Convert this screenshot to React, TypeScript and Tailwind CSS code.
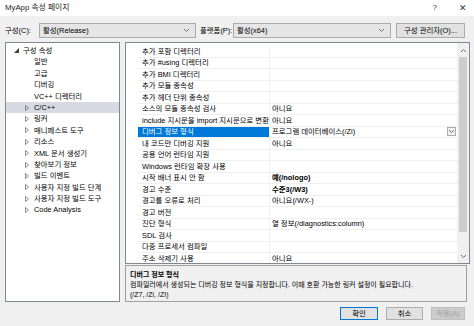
import React from 'react';

const FONT = "font-['Liberation_Sans','Noto_Sans_CJK_KR',sans-serif]";

const treeItems = [
  '일반',
  '고급',
  '디버깅',
  'VC++ 디렉터리',
  'C/C++',
  '링커',
  '매니페스트 도구',
  '리소스',
  'XML 문서 생성기',
  '찾아보기 정보',
  '빌드 이벤트',
  '사용자 지정 빌드 단계',
  '사용자 지정 빌드 도구',
  'Code Analysis',
];
const noArrow = ['일반', '고급', '디버깅', 'VC++ 디렉터리'];

const props: { name: string; value?: string; bold?: boolean }[] = [
  { name: '추가 포함 디렉터리' },
  { name: '추가 #using 디렉터리' },
  { name: '추가 BMI 디렉터리' },
  { name: '추가 모듈 종속성' },
  { name: '추가 헤더 단위 종속성' },
  { name: '소스의 모듈 종속성 검사', value: '아니요' },
  { name: 'include 지시문을 import 지시문으로 변환', value: '아니요' },
  { name: '디버그 정보 형식', value: '프로그램 데이터베이스(/Zi)' },
  { name: '내 코드만 디버깅 지원', value: '아니요' },
  { name: '공용 언어 런타임 지원' },
  { name: 'Windows 런타임 확장 사용' },
  { name: '시작 배너 표시 안 함', value: '예(/nologo)', bold: true },
  { name: '경고 수준', value: '수준3(/W3)', bold: true },
  { name: '경고를 오류로 처리', value: '아니요(/WX-)' },
  { name: '경고 버전' },
  { name: '진단 형식', value: '열 정보(/diagnostics:column)' },
  { name: 'SDL 검사' },
  { name: '다중 프로세서 컴파일' },
  { name: '주소 삭제기 사용', value: '아니요' },
];

function Chevron({ up = false }: { up?: boolean }) {
  return (
    <svg width="7" height="5" viewBox="0 0 7 5" className="shrink-0">
      <path
        d={up ? 'M1 4 L3.5 1.5 L6 4' : 'M1 1 L3.5 3.5 L6 1'}
        fill="none"
        stroke="#606060"
        strokeWidth="0.9"
      />
    </svg>
  );
}

function Select({ text, w }: { text: string; w: string }) {
  return (
    <div className={`${w} h-[15px] bg-[#e5e5e5] border border-[#acacac] flex items-center justify-between pl-[3px] pr-[5px]`}>
      <span>{text}</span>
      <Chevron />
    </div>
  );
}

export default function App() {
  return (
    <div className={`w-[474px] h-[326px] bg-[#f0f0f0] flex flex-col overflow-hidden text-[7.4px] leading-none text-black ${FONT}`}>
      {/* title bar */}
      <div className="h-[16px] bg-white flex items-center justify-between pl-[5px] pr-[7px] text-[7.8px] text-[#222]">
        <span>MyApp 속성 페이지</span>
        <div className="flex items-center gap-[22px] text-[8px] text-[#333]">
          <span>?</span>
          <span className="text-[9px]">✕</span>
        </div>
      </div>

      {/* config row */}
      <div className="flex items-center h-[15px] mt-[7px] pl-[5px]">
        <span className="w-[34px]">구성(C):</span>
        <Select text="활성(Release)" w="w-[157px]" />
        <span className="w-[37px] pl-[4px]">플랫폼(P):</span>
        <Select text="활성(x64)" w="w-[158px]" />
        <div className="ml-[5px] w-[69px] h-[15px] bg-[#e1e1e1] border border-[#adadad] flex items-center justify-center">
          구성 관리자(O)...
        </div>
      </div>

      {/* main */}
      <div className="flex mt-[4px] pl-[5px] gap-[5px]">
        {/* tree */}
        <div className="w-[115px] h-[260px] bg-white border border-[#828790] pt-[2px]">
          <div className="h-[11.4px] flex items-center pl-[8px]">
            <svg width="5" height="5" viewBox="0 0 5 5" className="mr-[4px]">
              <polygon points="5,0 5,5 0,5" fill="#404040" />
            </svg>
            <span>구성 속성</span>
          </div>
          {treeItems.map((t) => (
            <div
              key={t}
              className={`h-[11.4px] flex items-center pl-[19px] ${t === 'C/C++' ? 'bg-[#d9d9e3]' : ''}`}
            >
              <span className="w-[8px] flex">
                {!noArrow.includes(t) && (
                  <svg width="4" height="6" viewBox="0 0 4 6">
                    <path d="M0.5 0.5 L3.5 3 L0.5 5.5 Z" fill="none" stroke="#707070" strokeWidth="0.8" />
                  </svg>
                )}
              </span>
              <span className="ml-[1px] whitespace-nowrap">{t}</span>
            </div>
          ))}
        </div>

        {/* right column */}
        <div className="w-[345px] flex flex-col">
          <div className="h-[222px] bg-white border border-[#828790] flex overflow-hidden">
            <div className="flex-1 pl-[12px] pt-[3px] overflow-hidden">
              {props.map((p) => {
                const sel = p.name === '디버그 정보 형식';
                return (
                  <div key={p.name} className="h-[11.5px] flex border-b border-[#f0f0f0]">
                    <div
                      className={`w-[131px] shrink-0 flex items-center pl-[4px] whitespace-nowrap overflow-hidden ${sel ? 'bg-[#0078d7] text-white' : ''}`}
                    >
                      {p.name}
                    </div>
                    <div className="w-px bg-[#f0f0f0]" />
                    <div className={`flex-1 flex items-center justify-between pl-[2px] whitespace-nowrap ${p.bold ? 'font-bold' : ''}`}>
                      <span>{p.value ?? ''}</span>
                      {sel && (
                        <div className="w-[9px] h-[9px] mr-[1px] border border-[#acacac] bg-[#f0f0f0] flex items-center justify-center">
                          <Chevron />
                        </div>
                      )}
                    </div>
                  </div>
                );
              })}
            </div>
            {/* scrollbar */}
            <div className="w-[12px] bg-[#f0f0f0] flex flex-col items-center">
              <div className="h-[14px] flex items-center justify-center">
                <Chevron up />
              </div>
              <div className="w-[8px] h-[175px] bg-[#cdcdcd]" />
              <div className="flex-1" />
              <div className="h-[14px] flex items-center justify-center">
                <Chevron />
              </div>
            </div>
          </div>
          <div className="w-[342px] h-[37px] mt-[1px] bg-[#f0f0f0] border border-[#a0a0a0] px-[4px] pt-[5px] flex flex-col gap-[3px] text-[7px]">
            <span className="font-bold">디버그 정보 형식</span>
            <span>컴파일러에서 생성되는 디버깅 정보 형식을 지정합니다. 이때 호환 가능한 링커 설정이 필요합니다.</span>
            <span>(/Z7, /Zi, /ZI)</span>
          </div>
        </div>
      </div>

      {/* buttons */}
      <div className="flex justify-end mt-[5px] pr-[9px] gap-[8px]">
        <div className="w-[38px] h-[13px] bg-[#e1e1e1] border border-[#0078d7] flex items-center justify-center">확인</div>
        <div className="w-[37px] h-[13px] bg-[#e1e1e1] border border-[#adadad] flex items-center justify-center">취소</div>
        <div className="w-[34px] h-[13px] bg-[#cccccc] border border-[#bfbfbf] text-[#a0a0a0] flex items-center justify-center">적용(A)</div>
      </div>
    </div>
  );
}
